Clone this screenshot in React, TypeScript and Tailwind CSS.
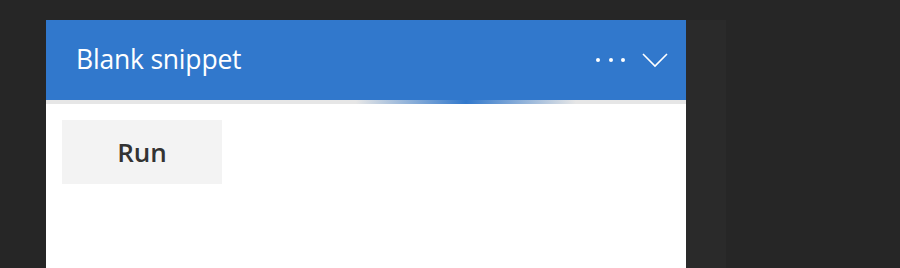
import React from 'react';

const App: React.FC = () => {
    return (
    <div className="h-[268px] w-[900px] overflow-hidden bg-[#262626] pt-5 pl-[46px] flex" style={{ fontFamily: '"Open Sans", "Noto Sans", sans-serif' }}>
        <div className="w-[640px] flex flex-col bg-white">
            {/* Header */}
            <div className="h-20 bg-[#3178cc] flex items-center justify-between pl-[30px] pr-[18px]">
                <span className="text-white text-[26.5px] leading-none tracking-[-0.2px] pb-[1px]">Blank snippet</span>
                <div className="flex items-center gap-[17px]">
                    <div className="flex items-center gap-[8.5px]">
                        <span className="w-1 h-1 rounded-full bg-white"></span>
                        <span className="w-1 h-1 rounded-full bg-white"></span>
                        <span className="w-1 h-1 rounded-full bg-white"></span>
                    </div>
                    <svg width="26" height="16" viewBox="0 0 26 16" fill="none" stroke="white" strokeWidth="1.6">
                        <path d="M1 2l12 12L25 2" />
                    </svg>
                </div>
            </div>
            {/* Progress bar */}
            <div className="h-1 bg-[#e6e6e6] relative overflow-hidden">
                <div className="absolute top-0 h-1 left-[310px] w-[220px] bg-[linear-gradient(90deg,rgba(49,120,204,0)_0%,#3178cc_50%,rgba(49,120,204,0)_100%)]"></div>
            </div>
            {/* Body */}
            <div className="flex-1 pt-4 pl-4">
                <button className="w-40 h-16 bg-[#f3f3f3] text-[#333333] text-[26px] font-semibold">Run</button>
            </div>
        </div>
        <div className="w-10 bg-[#2a2a2a]"></div>
    </div>
    );
}

export default App;
